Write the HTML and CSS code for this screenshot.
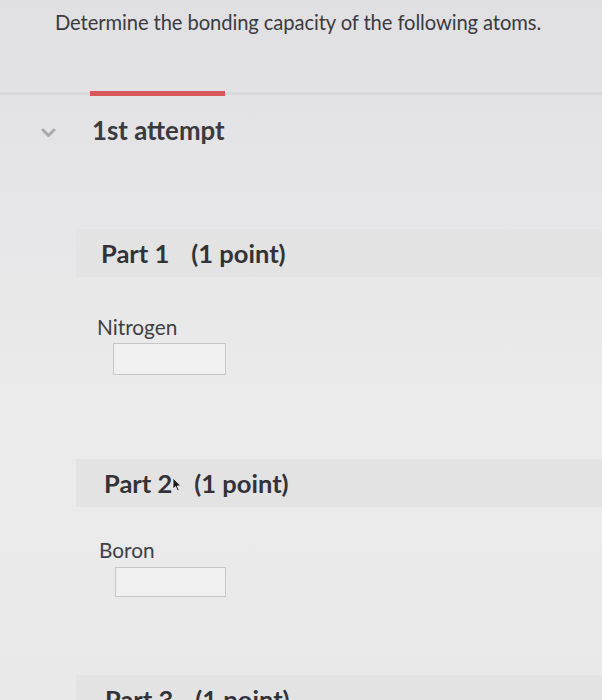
FILE: index.html
```html
<!DOCTYPE html>
<html>
<head>
<meta charset="utf-8">
<link rel="stylesheet" href="styles.css">
</head>
<body>
<div class="page">
  <h1 class="question">Determine the bonding capacity of the following atoms.</h1>
  <div class="progress"><div class="progress-fill"></div></div>
  <div class="attempt">
    <svg class="chevron" width="15" height="10" viewBox="0 0 15 10"><path d="M2 2 L7.5 7.5 L13 2" fill="none" stroke="#a9a9ad" stroke-width="3" stroke-linecap="round" stroke-linejoin="round"/></svg>
    <span class="attempt-title">1st attempt</span>
  </div>

  <section class="part part-1">
    <div class="part-head"><span class="part-name">Part 1</span><span class="part-points">(1 point)</span></div>
    <div class="prompt">Nitrogen</div>
    <div class="answer"></div>
  </section>

  <section class="part part-2">
    <div class="part-head"><span class="part-name">Part 2<svg class="cursor" width="10" height="15" viewBox="0 0 10 15"><path d="M1 1 L1 12 L3.6 9.6 L5.6 14 L7.2 13.2 L5.3 9 L8.8 9 Z" fill="#1d1d1f" stroke="#f4f4f4" stroke-width="0.8"/></svg></span><span class="part-points">(1 point)</span></div>
    <div class="prompt">Boron</div>
    <div class="answer"></div>
  </section>

  <section class="part part-3">
    <div class="part-head"><span class="part-name">Part 3</span><span class="part-points">(1 point)</span></div>
  </section>
</div>
</body>
</html>
```
FILE: styles.css
```css
html, body {
  margin: 0;
  padding: 0;
}
body {
  background: #e9e9eb;
  font-family: Lato, "Liberation Sans", sans-serif;
  color: #3a3a3e;
  width: 602px;
  height: 700px;
  overflow: hidden;
}
.page {
  background: linear-gradient(180deg, #e0e0e3 0%, #e6e6e8 30%, #ebebeb 60%, #e9e9e9 100%);
  height: 700px;
  overflow: hidden;
}
.question {
  margin: 0;
  padding: 7px 0 0 55px;
  font-size: 20.2px;
  font-weight: 400;
  line-height: 30px;
  color: #3b3b3f;
  letter-spacing: -0.1px;
}
.progress {
  margin-top: 55px;
  height: 3px;
  background: #d8d8da;
  position: relative;
}
.progress-fill {
  position: absolute;
  left: 90px;
  top: -1px;
  width: 135px;
  height: 5px;
  background: #d9575a;
}
.attempt {
  display: flex;
  align-items: center;
  padding: 20px 0 0 41px;
  height: 30px;
}
.chevron {
  margin-top: 6px;
}
.attempt-title {
  margin-left: 36px;
  font-size: 25.8px;
  font-weight: 700;
  color: #3a3a3f;
}
.part {
  margin-left: 76px;
}
.part-head {
  background: #e3e3e4;
  height: 48px;
  display: flex;
  align-items: center;
  padding-left: 25px;
  font-size: 25.5px;
  font-weight: 700;
  color: #333337;
}
.part-name {
  position: relative;
}
.part-points {
  margin-left: 22px;
}
.cursor {
  position: absolute;
  right: -10px;
  top: 9px;
}
.prompt {
  font-size: 20.8px;
  line-height: 24px;
  color: #404044;
  padding-left: 21px;
}
.answer {
  margin-left: 37px;
  width: 113px;
  height: 32px;
  box-sizing: border-box;
  border: 1px solid #c6c6c8;
  background: #f0f0f0;
}
.part-1 {
  margin-top: 84px;
}
.part-1 .prompt {
  margin-top: 38px;
}
.part-1 .answer {
  margin-top: 4px;
}
.part-2 {
  margin-top: 84px;
}
.part-2 .part-head {
  padding-left: 28px;
}
.part-2 .prompt {
  margin-top: 31px;
  padding-left: 23px;
}
.part-2 .answer {
  margin-top: 5px;
  margin-left: 39px;
  width: 111px;
  height: 30px;
}
.part-3 {
  margin-top: 78px;
}
.part-3 .part-head {
  padding-left: 29px;
}
```
